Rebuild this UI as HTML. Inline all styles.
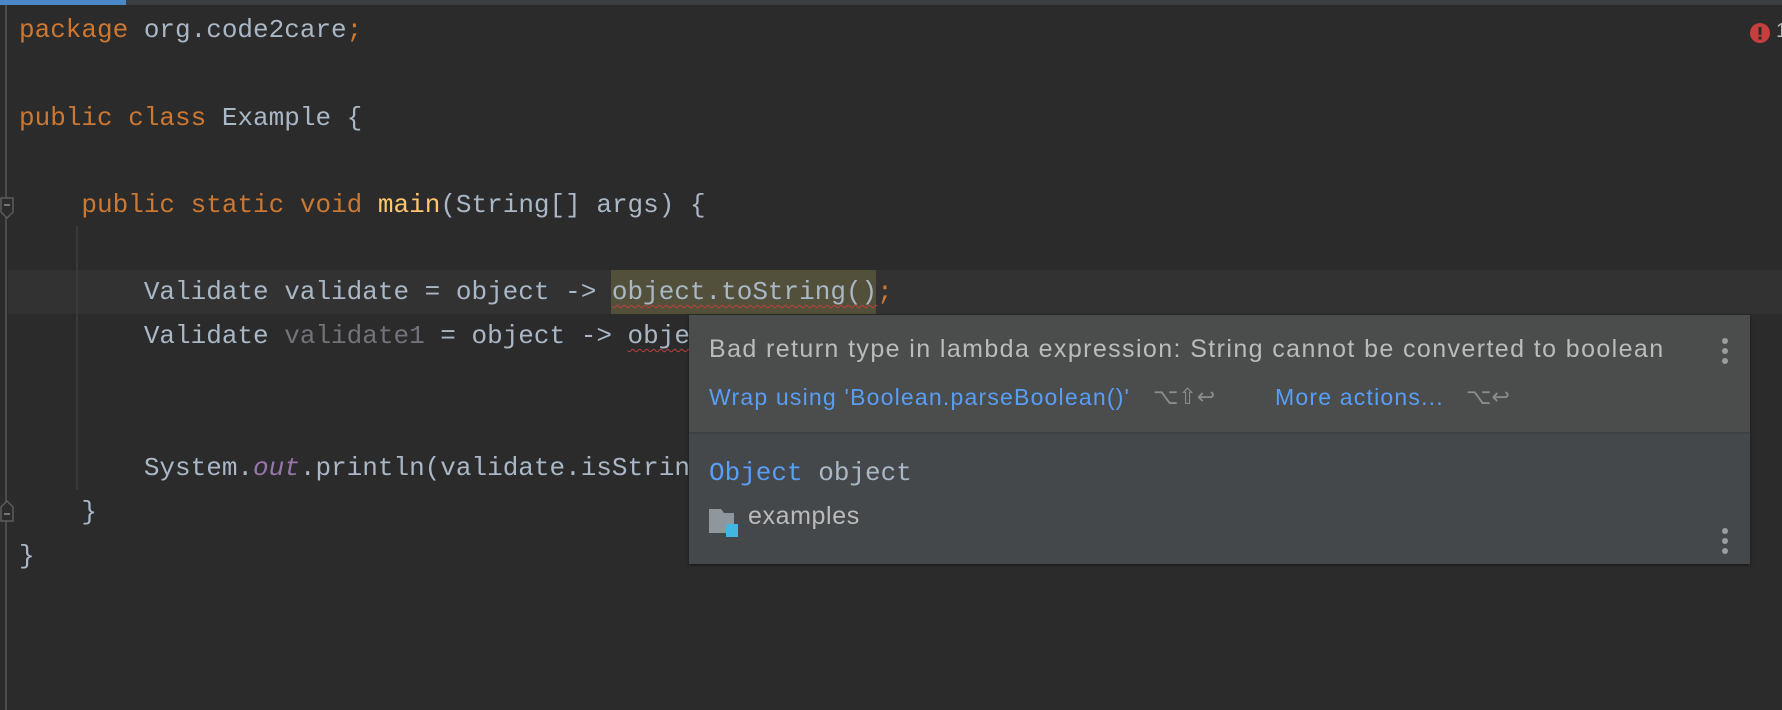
<!DOCTYPE html>
<html><head><meta charset="utf-8"><style>
html,body{margin:0;padding:0}
body{width:1782px;height:710px;background:#2b2b2b;position:relative;overflow:hidden;font-family:"Liberation Mono",monospace}
.topbar{position:absolute;left:0;top:0;width:1782px;height:5px;background:#3c3f41}
.tabsel{position:absolute;left:0;top:0;width:126px;height:5px;background:#4a88c7}
.gut{position:absolute;left:5px;top:5px;width:2px;height:705px;background:#4a4b4d}
.fold{position:absolute;left:0;width:14px;height:22px}
.guide{position:absolute;left:76px;top:226px;width:2px;height:264px;background:#393939}
.cur{position:absolute;left:8px;top:270px;width:1774px;height:44px;background:#323232}
.sel{position:absolute;left:611px;top:270px;width:265px;height:44px;background:#52503a}
.line{position:absolute;left:19px;font-size:26px;line-height:44px;height:44px;color:#a9b7c6;white-space:pre}
.k{color:#cc7832}.m{color:#ffc66d}.o{color:#9876aa;font-style:italic}.g{color:#72737a}
.err{text-decoration:underline wavy #bc3f3c;text-decoration-thickness:1px;text-underline-offset:5px}
.pop{position:absolute;left:689px;top:315px;width:1061px;height:249px;background:#45484a;box-shadow:0 1px 3px rgba(0,0,0,.5);font-family:"Liberation Sans",sans-serif}
.ptop{position:absolute;left:0;top:0;width:100%;height:117px;background:#4b4d4d;border-bottom:2px solid #3e4142}
.msg{position:absolute;left:20px;top:20px;font-size:25px;letter-spacing:1.4px;color:#bbbbbb;white-space:nowrap}
.act{position:absolute;top:69px;font-size:23px;letter-spacing:1.2px;color:#589df6;white-space:nowrap}
.sc{position:absolute;top:69px;font-size:22px;color:#8c8c8c;white-space:nowrap}
.dots{position:absolute;width:6px}
.dots i{display:block;width:6px;height:6px;border-radius:3px;background:#9a9da0;margin-bottom:4px}
</style></head><body>
<div class="topbar"></div><div class="tabsel"></div>
<div class="gut"></div>
<svg class="fold" style="top:197px" viewBox="0 0 14 22"><path d="M1 1H13V15L7 21L1 15Z" fill="#2b2b2b" stroke="#5a5c5e" stroke-width="1.5"/><path d="M4 8H10" stroke="#8a8c8e" stroke-width="1.5"/></svg>
<svg class="fold" style="top:500px" viewBox="0 0 14 22"><path d="M1 21H13V7L7 1L1 7Z" fill="#2b2b2b" stroke="#5a5c5e" stroke-width="1.5"/><path d="M4 14H10" stroke="#8a8c8e" stroke-width="1.5"/></svg>
<div class="cur"></div>
<div class="guide"></div>
<div class="sel"></div>
<div class="line" style="top:8px"><span class="k">package</span> org.code2care<span class="k">;</span></div>
<div class="line" style="top:96px"><span class="k">public class</span> Example {</div>
<div class="line" style="top:183px">    <span class="k">public static void</span> <span class="m">main</span>(String[] args) {</div>
<div class="line" style="top:270px">        Validate validate = object -&gt; <span class="err">object.toString()</span><span class="k">;</span></div>
<div class="line" style="top:314px">        Validate <span class="g">validate1</span> = object -&gt; <span class="err">object</span></div>
<div class="line" style="top:446px">        System.<span class="o">out</span>.println(validate.isString</div>
<div class="line" style="top:490px">    }</div>
<div class="line" style="top:534px">}</div>
<svg style="position:absolute;left:1750px;top:23px" width="20" height="20" viewBox="0 0 20 20"><circle cx="10" cy="10" r="10" fill="#c73e3e"/><rect x="8.5" y="4" width="3" height="8" fill="#2b2b2b"/><rect x="8.5" y="13.5" width="3" height="3" fill="#2b2b2b"/></svg>
<div style="position:absolute;left:1776px;top:20px;color:#bbb;font:20px 'Liberation Sans',sans-serif">1</div>
<div class="pop">
 <div class="ptop"></div>
 <div class="msg">Bad return type in lambda expression: String cannot be converted to boolean</div>
 <div class="act" style="left:20px">Wrap using 'Boolean.parseBoolean()'</div>
 <div class="sc" style="left:464px">⌥⇧↩</div>
 <div class="act" style="left:586px">More actions...</div>
 <div class="sc" style="left:777px">⌥↩</div>
 <div class="dots" style="left:1033px;top:23px"><i></i><i></i><i></i></div>
 <div style="position:absolute;left:20px;top:143px;font:26px 'Liberation Mono',monospace;color:#a9b7c6;white-space:pre"><span style="color:#589df6">Object</span> object</div>
 <svg style="position:absolute;left:20px;top:192px" width="30" height="30" viewBox="0 0 30 30"><path d="M0 2H12L15 6H25V26H0Z" fill="#8e979e"/><rect x="17" y="17" width="12" height="13" fill="#40b6e0"/></svg>
 <div style="position:absolute;left:59px;top:187px;font-size:25px;letter-spacing:0.6px;color:#bbbbbb">examples</div>
 <div class="dots" style="left:1033px;top:213px"><i></i><i></i><i></i></div>
</div>
</body></html>
